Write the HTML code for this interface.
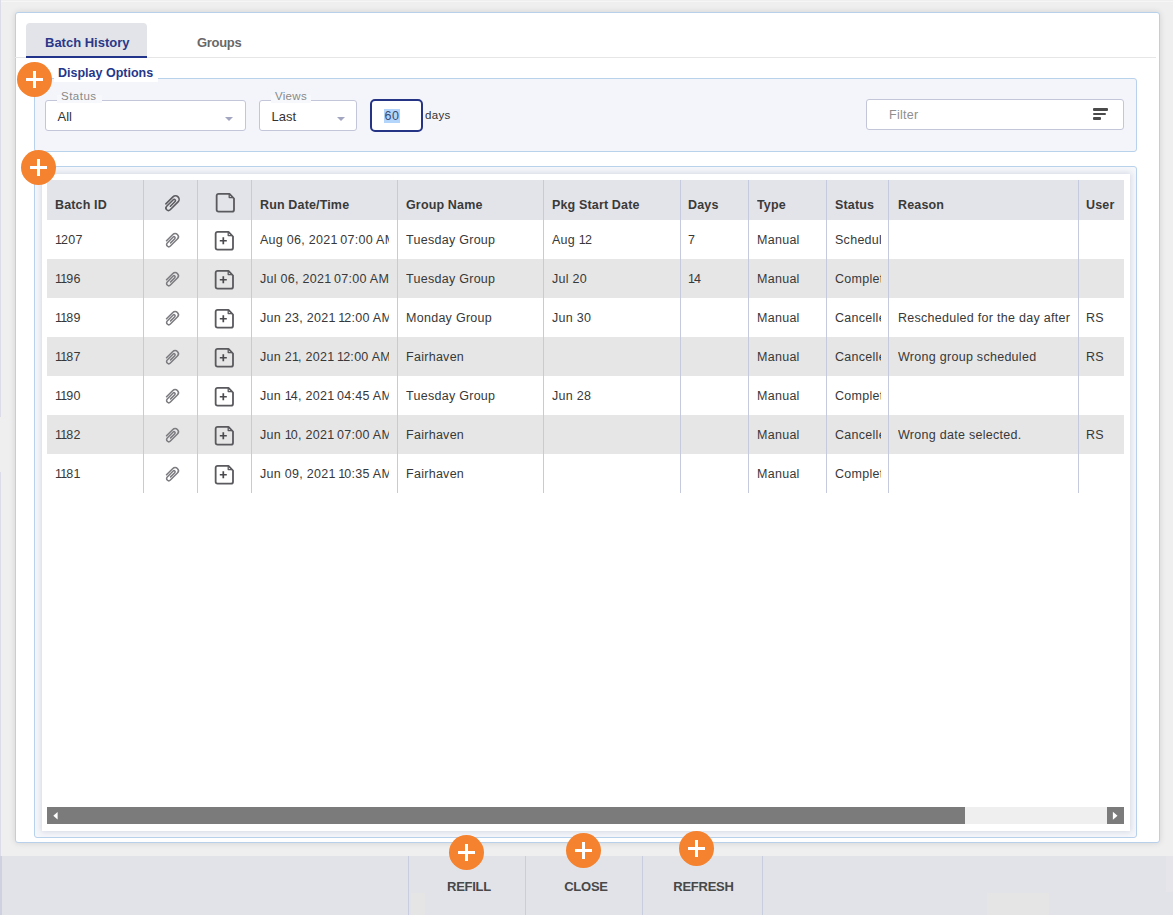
<!DOCTYPE html>
<html><head><meta charset="utf-8">
<style>
*{box-sizing:border-box;margin:0;padding:0}
html,body{width:1173px;height:915px;overflow:hidden;background:#efefef;font-family:"Liberation Sans",sans-serif;position:relative}
.abs{position:absolute}
.orb{position:absolute;border-radius:50%;background:#f4822f;z-index:20}
.orb::before{content:"";position:absolute;left:9px;top:16px;width:17px;height:3px;background:#fff}
.orb::after{content:"";position:absolute;left:16px;top:9px;width:3px;height:17px;background:#fff}
.hd{position:absolute;font-size:12.5px;font-weight:bold;color:#3a3a3a;white-space:nowrap;overflow:hidden;letter-spacing:0.15px}
.n1{letter-spacing:-0.9px}
.cell{position:absolute;font-size:12.5px;color:#383838;white-space:nowrap;overflow:hidden;letter-spacing:0.28px}
</style></head><body>
<div class="abs" style="left:0;top:0;width:1173px;height:915px;background:#efefef"></div>
<!-- panel -->
<div class="abs" style="left:15px;top:12px;width:1145px;height:831px;background:#fff;border:1px solid #b8d0ea;border-radius:3px;box-shadow:0 0 6px rgba(0,0,0,0.12)"></div>
<!-- tabs -->
<div class="abs" style="left:15px;top:57px;width:1141px;height:1px;background:#e6e6e6"></div>
<div class="abs" style="left:26px;top:23px;width:121px;height:35px;background:#e3e4e9;border-radius:4px 4px 0 0;border-bottom:2px solid #22338a"></div>
<div class="abs" style="left:45px;top:25px;height:34px;line-height:36px;font-size:13px;font-weight:bold;color:#2a388a">Batch History</div>
<div class="abs" style="left:197px;top:25px;height:34px;line-height:36px;font-size:13px;letter-spacing:-0.3px;font-weight:bold;color:#686868">Groups</div>
<!-- fieldset -->
<div class="abs" style="left:34px;top:78px;width:1103px;height:74px;background:#f3f5fa;border:1px solid #b9d2ec;border-radius:3px"></div>
<div class="abs" style="left:54px;top:72px;width:104px;height:10px;background:#fff"></div>
<div class="abs" style="left:58px;top:64.5px;font-size:12.5px;font-weight:bold;color:#26368a;line-height:16px">Display Options</div>
<!-- status select -->
<div class="abs" style="left:45px;top:100px;width:201px;height:31px;background:#fff;border:1px solid #c3c6d8;border-radius:3px"></div>
<div class="abs" style="left:57px;top:95px;width:45px;height:8px;background:#f7f8fc"></div>
<div class="abs" style="left:61px;top:89px;font-size:11.5px;letter-spacing:0.5px;color:#888;line-height:14px">Status</div>
<div class="abs" style="left:57.5px;top:108.5px;font-size:13px;color:#333;line-height:16px">All</div>
<div class="abs" style="left:225px;top:117px;width:0;height:0;border-left:4px solid transparent;border-right:4px solid transparent;border-top:4px solid #a2a6c0"></div>
<!-- views select -->
<div class="abs" style="left:259px;top:100px;width:98px;height:31px;background:#fff;border:1px solid #c3c6d8;border-radius:3px"></div>
<div class="abs" style="left:271px;top:95px;width:40px;height:8px;background:#f7f8fc"></div>
<div class="abs" style="left:275px;top:89px;font-size:11.5px;letter-spacing:0.3px;color:#888;line-height:14px">Views</div>
<div class="abs" style="left:271.5px;top:108.5px;font-size:13px;color:#333;line-height:16px">Last</div>
<div class="abs" style="left:337px;top:117px;width:0;height:0;border-left:4px solid transparent;border-right:4px solid transparent;border-top:4px solid #a2a6c0"></div>
<!-- 60 input -->
<div class="abs" style="left:369.5px;top:99px;width:53.5px;height:33px;background:#fff;border:2.5px solid #263486;border-radius:5px"></div>
<div class="abs" style="left:384.3px;top:109.2px;width:15.8px;height:13.6px;background:#b4d5fb"></div>
<div class="abs" style="left:384.5px;top:108px;font-size:12.5px;letter-spacing:0.6px;color:#3a4a70;line-height:16px">60</div>
<div class="abs" style="left:425px;top:107px;font-size:11.5px;letter-spacing:0.35px;color:#333;line-height:16px">days</div>
<!-- filter -->
<div class="abs" style="left:866px;top:99px;width:258px;height:31px;background:#fff;border:1px solid #c3c6d8;border-radius:3px"></div>
<div class="abs" style="left:889px;top:107px;font-size:12.5px;letter-spacing:0.3px;color:#8e8e8e;line-height:16px">Filter</div>
<div class="abs" style="left:1093px;top:108px;width:15px;height:2.5px;border-radius:1px;background:#4a4a4a"></div>
<div class="abs" style="left:1093px;top:112.5px;width:12.5px;height:2.5px;border-radius:1px;background:#4a4a4a"></div>
<div class="abs" style="left:1093px;top:117px;width:8px;height:2.5px;border-radius:1px;background:#4a4a4a"></div>
<!-- grid box -->
<div class="abs" style="left:34px;top:166px;width:1103px;height:672px;background:#f5f7fb;border:1px solid #b9d2ec;border-radius:3px"></div>
<div class="abs" style="left:42px;top:174px;width:1088px;height:657px;background:#fff;box-shadow:0 0 6px 1px rgba(60,70,110,0.17)"></div>
<div style="position:absolute;left:47px;top:180px;width:1077px;height:40px;background:#e3e4e9"></div>
<div style="position:absolute;left:47px;top:220px;width:1077px;height:39px;background:#fff"></div>
<div style="position:absolute;left:47px;top:259px;width:1077px;height:39px;background:#e6e6e6"></div>
<div style="position:absolute;left:47px;top:298px;width:1077px;height:39px;background:#fff"></div>
<div style="position:absolute;left:47px;top:337px;width:1077px;height:39px;background:#e6e6e6"></div>
<div style="position:absolute;left:47px;top:376px;width:1077px;height:39px;background:#fff"></div>
<div style="position:absolute;left:47px;top:415px;width:1077px;height:39px;background:#e6e6e6"></div>
<div style="position:absolute;left:47px;top:454px;width:1077px;height:39px;background:#fff"></div>
<div style="position:absolute;left:143px;top:180px;width:1px;height:313px;background:#c6cadf"></div>
<div style="position:absolute;left:197px;top:180px;width:1px;height:313px;background:#c6cadf"></div>
<div style="position:absolute;left:251px;top:180px;width:1px;height:313px;background:#c6cadf"></div>
<div style="position:absolute;left:397px;top:180px;width:1px;height:313px;background:#c6cadf"></div>
<div style="position:absolute;left:543px;top:180px;width:1px;height:313px;background:#c6cadf"></div>
<div style="position:absolute;left:680px;top:180px;width:1px;height:313px;background:#c6cadf"></div>
<div style="position:absolute;left:747.6px;top:180px;width:1px;height:313px;background:#c6cadf"></div>
<div style="position:absolute;left:826px;top:180px;width:1px;height:313px;background:#c6cadf"></div>
<div style="position:absolute;left:888px;top:180px;width:1px;height:313px;background:#c6cadf"></div>
<div style="position:absolute;left:1078px;top:180px;width:1px;height:313px;background:#c6cadf"></div>
<div class="hd" style="left:55px;top:180px;width:81px;height:40px;line-height:51px">Batch ID</div>
<svg width="24" height="24" viewBox="-12 -12 24 24" style="position:absolute;left:160px;top:191px"><g transform="rotate(45) scale(0.95)" fill="none" stroke="#5c5c60" stroke-width="1.7" stroke-linecap="round"><path d="M-3.9 5.2 V-5.3 A3.8 3.8 0 0 1 3.7 -5.3 V6.4 A2.6 2.6 0 0 1 -1.5 6.4 V-3.4 A1.35 1.35 0 0 1 1.2 -3.4 V3.6"/></g></svg>
<svg width="21" height="22" viewBox="0 0 21 22" style="position:absolute;left:215px;top:192px"><g fill="none" stroke="#5a5a5e" stroke-width="1.8" stroke-linejoin="round"><path d="M3.65 1.8 H14.5 L19 6.5 V17.7 Q19 19.7 17 19.7 H3.65 Q1.65 19.7 1.65 17.7 V3.8 Q1.65 1.8 3.65 1.8 Z"/><path d="M14.2 2 V5.6 H18.2" stroke-width="1.3"/></g></svg>
<div class="hd" style="left:260px;top:180px;width:129px;height:40px;line-height:51px">Run Date/Time</div>
<div class="hd" style="left:406px;top:180px;width:131px;height:40px;line-height:51px">Group Name</div>
<div class="hd" style="left:552px;top:180px;width:120px;height:40px;line-height:51px">Pkg Start Date</div>
<div class="hd" style="left:688px;top:180px;width:52px;height:40px;line-height:51px">Days</div>
<div class="hd" style="left:757px;top:180px;width:62px;height:40px;line-height:51px">Type</div>
<div class="hd" style="left:835px;top:180px;width:46px;height:40px;line-height:51px">Status</div>
<div class="hd" style="left:898px;top:180px;width:174px;height:40px;line-height:51px">Reason</div>
<div class="hd" style="left:1086px;top:180px;width:30px;height:40px;line-height:51px">User</div>
<div class="cell" style="left:55px;top:220px;width:81px;height:39px;line-height:40px"><span class="n1">1</span>207</div>
<svg width="24" height="24" viewBox="-12 -12 24 24" style="position:absolute;left:160px;top:228px"><g transform="rotate(45) scale(0.85)" fill="none" stroke="#7c7c80" stroke-width="1.8" stroke-linecap="round"><path d="M-3.9 5.2 V-5.3 A3.8 3.8 0 0 1 3.7 -5.3 V6.4 A2.6 2.6 0 0 1 -1.5 6.4 V-3.4 A1.35 1.35 0 0 1 1.2 -3.4 V3.6"/></g></svg>
<svg width="21" height="22" viewBox="0 0 21 22" style="position:absolute;left:214px;top:230px"><g fill="none" stroke="#5a5a5e" stroke-width="1.8" stroke-linejoin="round"><path d="M3.65 1.8 H14.5 L19 6.5 V17.7 Q19 19.7 17 19.7 H3.65 Q1.65 19.7 1.65 17.7 V3.8 Q1.65 1.8 3.65 1.8 Z"/><path d="M14.2 2 V5.6 H18.2" stroke-width="1.3"/><path d="M5.8 10.75 H12.8 M9.3 7.25 V14.25" stroke="#4a4a4e" stroke-width="1.7" stroke-linecap="butt"/></g></svg>
<div class="cell" style="left:260px;top:220px;width:129px;height:39px;line-height:40px">Aug 06, 202<span class="n1">1</span> 07:00 AM</div>
<div class="cell" style="left:406px;top:220px;width:131px;height:39px;line-height:40px">Tuesday Group</div>
<div class="cell" style="left:552px;top:220px;width:120px;height:39px;line-height:40px">Aug <span class="n1">1</span>2</div>
<div class="cell" style="left:688px;top:220px;width:52px;height:39px;line-height:40px">7</div>
<div class="cell" style="left:757px;top:220px;width:62px;height:39px;line-height:40px">Manual</div>
<div class="cell" style="left:835px;top:220px;width:46px;height:39px;line-height:40px">Scheduled</div>
<div class="cell" style="left:55px;top:259px;width:81px;height:39px;line-height:40px"><span class="n1">1</span><span class="n1">1</span>96</div>
<svg width="24" height="24" viewBox="-12 -12 24 24" style="position:absolute;left:160px;top:267px"><g transform="rotate(45) scale(0.85)" fill="none" stroke="#7c7c80" stroke-width="1.8" stroke-linecap="round"><path d="M-3.9 5.2 V-5.3 A3.8 3.8 0 0 1 3.7 -5.3 V6.4 A2.6 2.6 0 0 1 -1.5 6.4 V-3.4 A1.35 1.35 0 0 1 1.2 -3.4 V3.6"/></g></svg>
<svg width="21" height="22" viewBox="0 0 21 22" style="position:absolute;left:214px;top:269px"><g fill="none" stroke="#5a5a5e" stroke-width="1.8" stroke-linejoin="round"><path d="M3.65 1.8 H14.5 L19 6.5 V17.7 Q19 19.7 17 19.7 H3.65 Q1.65 19.7 1.65 17.7 V3.8 Q1.65 1.8 3.65 1.8 Z"/><path d="M14.2 2 V5.6 H18.2" stroke-width="1.3"/><path d="M5.8 10.75 H12.8 M9.3 7.25 V14.25" stroke="#4a4a4e" stroke-width="1.7" stroke-linecap="butt"/></g></svg>
<div class="cell" style="left:260px;top:259px;width:129px;height:39px;line-height:40px">Jul 06, 202<span class="n1">1</span> 07:00 AM</div>
<div class="cell" style="left:406px;top:259px;width:131px;height:39px;line-height:40px">Tuesday Group</div>
<div class="cell" style="left:552px;top:259px;width:120px;height:39px;line-height:40px">Jul 20</div>
<div class="cell" style="left:688px;top:259px;width:52px;height:39px;line-height:40px"><span class="n1">1</span>4</div>
<div class="cell" style="left:757px;top:259px;width:62px;height:39px;line-height:40px">Manual</div>
<div class="cell" style="left:835px;top:259px;width:46px;height:39px;line-height:40px">Completed</div>
<div class="cell" style="left:55px;top:298px;width:81px;height:39px;line-height:40px"><span class="n1">1</span><span class="n1">1</span>89</div>
<svg width="24" height="24" viewBox="-12 -12 24 24" style="position:absolute;left:160px;top:306px"><g transform="rotate(45) scale(0.85)" fill="none" stroke="#7c7c80" stroke-width="1.8" stroke-linecap="round"><path d="M-3.9 5.2 V-5.3 A3.8 3.8 0 0 1 3.7 -5.3 V6.4 A2.6 2.6 0 0 1 -1.5 6.4 V-3.4 A1.35 1.35 0 0 1 1.2 -3.4 V3.6"/></g></svg>
<svg width="21" height="22" viewBox="0 0 21 22" style="position:absolute;left:214px;top:308px"><g fill="none" stroke="#5a5a5e" stroke-width="1.8" stroke-linejoin="round"><path d="M3.65 1.8 H14.5 L19 6.5 V17.7 Q19 19.7 17 19.7 H3.65 Q1.65 19.7 1.65 17.7 V3.8 Q1.65 1.8 3.65 1.8 Z"/><path d="M14.2 2 V5.6 H18.2" stroke-width="1.3"/><path d="M5.8 10.75 H12.8 M9.3 7.25 V14.25" stroke="#4a4a4e" stroke-width="1.7" stroke-linecap="butt"/></g></svg>
<div class="cell" style="left:260px;top:298px;width:129px;height:39px;line-height:40px">Jun 23, 202<span class="n1">1</span> <span class="n1">1</span>2:00 AM</div>
<div class="cell" style="left:406px;top:298px;width:131px;height:39px;line-height:40px">Monday Group</div>
<div class="cell" style="left:552px;top:298px;width:120px;height:39px;line-height:40px">Jun 30</div>
<div class="cell" style="left:757px;top:298px;width:62px;height:39px;line-height:40px">Manual</div>
<div class="cell" style="left:835px;top:298px;width:46px;height:39px;line-height:40px">Cancelled</div>
<div class="cell" style="left:898px;top:298px;width:174px;height:39px;line-height:40px">Rescheduled for the day after</div>
<div class="cell" style="left:1086px;top:298px;width:30px;height:39px;line-height:40px">RS</div>
<div class="cell" style="left:55px;top:337px;width:81px;height:39px;line-height:40px"><span class="n1">1</span><span class="n1">1</span>87</div>
<svg width="24" height="24" viewBox="-12 -12 24 24" style="position:absolute;left:160px;top:345px"><g transform="rotate(45) scale(0.85)" fill="none" stroke="#7c7c80" stroke-width="1.8" stroke-linecap="round"><path d="M-3.9 5.2 V-5.3 A3.8 3.8 0 0 1 3.7 -5.3 V6.4 A2.6 2.6 0 0 1 -1.5 6.4 V-3.4 A1.35 1.35 0 0 1 1.2 -3.4 V3.6"/></g></svg>
<svg width="21" height="22" viewBox="0 0 21 22" style="position:absolute;left:214px;top:347px"><g fill="none" stroke="#5a5a5e" stroke-width="1.8" stroke-linejoin="round"><path d="M3.65 1.8 H14.5 L19 6.5 V17.7 Q19 19.7 17 19.7 H3.65 Q1.65 19.7 1.65 17.7 V3.8 Q1.65 1.8 3.65 1.8 Z"/><path d="M14.2 2 V5.6 H18.2" stroke-width="1.3"/><path d="M5.8 10.75 H12.8 M9.3 7.25 V14.25" stroke="#4a4a4e" stroke-width="1.7" stroke-linecap="butt"/></g></svg>
<div class="cell" style="left:260px;top:337px;width:129px;height:39px;line-height:40px">Jun 2<span class="n1">1</span>, 202<span class="n1">1</span> <span class="n1">1</span>2:00 AM</div>
<div class="cell" style="left:406px;top:337px;width:131px;height:39px;line-height:40px">Fairhaven</div>
<div class="cell" style="left:757px;top:337px;width:62px;height:39px;line-height:40px">Manual</div>
<div class="cell" style="left:835px;top:337px;width:46px;height:39px;line-height:40px">Cancelled</div>
<div class="cell" style="left:898px;top:337px;width:174px;height:39px;line-height:40px">Wrong group scheduled</div>
<div class="cell" style="left:1086px;top:337px;width:30px;height:39px;line-height:40px">RS</div>
<div class="cell" style="left:55px;top:376px;width:81px;height:39px;line-height:40px"><span class="n1">1</span><span class="n1">1</span>90</div>
<svg width="24" height="24" viewBox="-12 -12 24 24" style="position:absolute;left:160px;top:384px"><g transform="rotate(45) scale(0.85)" fill="none" stroke="#7c7c80" stroke-width="1.8" stroke-linecap="round"><path d="M-3.9 5.2 V-5.3 A3.8 3.8 0 0 1 3.7 -5.3 V6.4 A2.6 2.6 0 0 1 -1.5 6.4 V-3.4 A1.35 1.35 0 0 1 1.2 -3.4 V3.6"/></g></svg>
<svg width="21" height="22" viewBox="0 0 21 22" style="position:absolute;left:214px;top:386px"><g fill="none" stroke="#5a5a5e" stroke-width="1.8" stroke-linejoin="round"><path d="M3.65 1.8 H14.5 L19 6.5 V17.7 Q19 19.7 17 19.7 H3.65 Q1.65 19.7 1.65 17.7 V3.8 Q1.65 1.8 3.65 1.8 Z"/><path d="M14.2 2 V5.6 H18.2" stroke-width="1.3"/><path d="M5.8 10.75 H12.8 M9.3 7.25 V14.25" stroke="#4a4a4e" stroke-width="1.7" stroke-linecap="butt"/></g></svg>
<div class="cell" style="left:260px;top:376px;width:129px;height:39px;line-height:40px">Jun <span class="n1">1</span>4, 202<span class="n1">1</span> 04:45 AM</div>
<div class="cell" style="left:406px;top:376px;width:131px;height:39px;line-height:40px">Tuesday Group</div>
<div class="cell" style="left:552px;top:376px;width:120px;height:39px;line-height:40px">Jun 28</div>
<div class="cell" style="left:757px;top:376px;width:62px;height:39px;line-height:40px">Manual</div>
<div class="cell" style="left:835px;top:376px;width:46px;height:39px;line-height:40px">Completed</div>
<div class="cell" style="left:55px;top:415px;width:81px;height:39px;line-height:40px"><span class="n1">1</span><span class="n1">1</span>82</div>
<svg width="24" height="24" viewBox="-12 -12 24 24" style="position:absolute;left:160px;top:423px"><g transform="rotate(45) scale(0.85)" fill="none" stroke="#7c7c80" stroke-width="1.8" stroke-linecap="round"><path d="M-3.9 5.2 V-5.3 A3.8 3.8 0 0 1 3.7 -5.3 V6.4 A2.6 2.6 0 0 1 -1.5 6.4 V-3.4 A1.35 1.35 0 0 1 1.2 -3.4 V3.6"/></g></svg>
<svg width="21" height="22" viewBox="0 0 21 22" style="position:absolute;left:214px;top:425px"><g fill="none" stroke="#5a5a5e" stroke-width="1.8" stroke-linejoin="round"><path d="M3.65 1.8 H14.5 L19 6.5 V17.7 Q19 19.7 17 19.7 H3.65 Q1.65 19.7 1.65 17.7 V3.8 Q1.65 1.8 3.65 1.8 Z"/><path d="M14.2 2 V5.6 H18.2" stroke-width="1.3"/><path d="M5.8 10.75 H12.8 M9.3 7.25 V14.25" stroke="#4a4a4e" stroke-width="1.7" stroke-linecap="butt"/></g></svg>
<div class="cell" style="left:260px;top:415px;width:129px;height:39px;line-height:40px">Jun <span class="n1">1</span>0, 202<span class="n1">1</span> 07:00 AM</div>
<div class="cell" style="left:406px;top:415px;width:131px;height:39px;line-height:40px">Fairhaven</div>
<div class="cell" style="left:757px;top:415px;width:62px;height:39px;line-height:40px">Manual</div>
<div class="cell" style="left:835px;top:415px;width:46px;height:39px;line-height:40px">Cancelled</div>
<div class="cell" style="left:898px;top:415px;width:174px;height:39px;line-height:40px">Wrong date selected.</div>
<div class="cell" style="left:1086px;top:415px;width:30px;height:39px;line-height:40px">RS</div>
<div class="cell" style="left:55px;top:454px;width:81px;height:39px;line-height:40px"><span class="n1">1</span><span class="n1">1</span>8<span class="n1">1</span></div>
<svg width="24" height="24" viewBox="-12 -12 24 24" style="position:absolute;left:160px;top:462px"><g transform="rotate(45) scale(0.85)" fill="none" stroke="#7c7c80" stroke-width="1.8" stroke-linecap="round"><path d="M-3.9 5.2 V-5.3 A3.8 3.8 0 0 1 3.7 -5.3 V6.4 A2.6 2.6 0 0 1 -1.5 6.4 V-3.4 A1.35 1.35 0 0 1 1.2 -3.4 V3.6"/></g></svg>
<svg width="21" height="22" viewBox="0 0 21 22" style="position:absolute;left:214px;top:464px"><g fill="none" stroke="#5a5a5e" stroke-width="1.8" stroke-linejoin="round"><path d="M3.65 1.8 H14.5 L19 6.5 V17.7 Q19 19.7 17 19.7 H3.65 Q1.65 19.7 1.65 17.7 V3.8 Q1.65 1.8 3.65 1.8 Z"/><path d="M14.2 2 V5.6 H18.2" stroke-width="1.3"/><path d="M5.8 10.75 H12.8 M9.3 7.25 V14.25" stroke="#4a4a4e" stroke-width="1.7" stroke-linecap="butt"/></g></svg>
<div class="cell" style="left:260px;top:454px;width:129px;height:39px;line-height:40px">Jun 09, 202<span class="n1">1</span> <span class="n1">1</span>0:35 AM</div>
<div class="cell" style="left:406px;top:454px;width:131px;height:39px;line-height:40px">Fairhaven</div>
<div class="cell" style="left:757px;top:454px;width:62px;height:39px;line-height:40px">Manual</div>
<div class="cell" style="left:835px;top:454px;width:46px;height:39px;line-height:40px">Completed</div>
<!-- scrollbar -->
<div class="abs" style="left:47px;top:807px;width:1077px;height:17.2px;background:#efefef"></div>
<div class="abs" style="left:47px;top:807px;width:918px;height:17.2px;background:#7b7b7c"></div>
<div class="abs" style="left:1106.5px;top:807px;width:17.7px;height:17.2px;background:#7b7b7c"></div>
<svg class="abs" style="left:0;top:0" width="1173" height="915"><polygon points="57.6,811.9 53.3,815.7 57.6,819.5" fill="#fff"/><polygon points="1112.9,811.8 1117.5,815.7 1112.9,819.7" fill="#fff"/></svg>

<!-- bottom bar -->
<div class="abs" style="left:1px;top:1px;width:1172px;height:1px;background:#f6f6f6"></div>
<div class="abs" style="left:0;top:0;width:1px;height:417px;background:#dcdce8"></div>
<div class="abs" style="left:0;top:472px;width:1px;height:443px;background:#dcdce8"></div>
<div class="abs" style="left:0;top:856px;width:1173px;height:59px;background:#e2e3e8"></div>
<div class="abs" style="left:986.6px;top:893px;width:62.3px;height:22px;background:#e5e5e6"></div>
<div class="abs" style="left:411px;top:893px;width:14px;height:22px;background:#e5e5e6"></div>
<div class="abs" style="left:1166px;top:856px;width:7px;height:36px;background:#e6e6ea"></div>
<div class="abs" style="left:0;top:856px;width:1.5px;height:59px;background:#cfd0e0"></div>
<div class="abs" style="left:408px;top:856px;width:1px;height:59px;background:#c9cde0"></div>
<div class="abs" style="left:525px;top:856px;width:1px;height:59px;background:#c9cde0"></div>
<div class="abs" style="left:642px;top:856px;width:1px;height:59px;background:#c9cde0"></div>
<div class="abs" style="left:762px;top:856px;width:1px;height:59px;background:#c9cde0"></div>
<div class="abs" style="left:411px;top:879px;width:116px;text-align:center;font-size:13px;letter-spacing:-0.25px;font-weight:bold;color:#484848;line-height:16px">REFILL</div>
<div class="abs" style="left:528px;top:879px;width:116px;text-align:center;font-size:13px;letter-spacing:-0.25px;font-weight:bold;color:#484848;line-height:16px">CLOSE</div>
<div class="abs" style="left:644px;top:879px;width:119px;text-align:center;font-size:13px;letter-spacing:-0.25px;font-weight:bold;color:#484848;line-height:16px">REFRESH</div>
<div class="orb" style="left:17.0px;top:62.0px;width:35px;height:35px"></div>
<div class="orb" style="left:21.0px;top:150.0px;width:35px;height:35px"></div>
<div class="orb" style="left:449.0px;top:835.0px;width:35px;height:35px"></div>
<div class="orb" style="left:566.0px;top:833.0px;width:35px;height:35px"></div>
<div class="orb" style="left:679.0px;top:831.0px;width:35px;height:35px"></div>
</body></html>
